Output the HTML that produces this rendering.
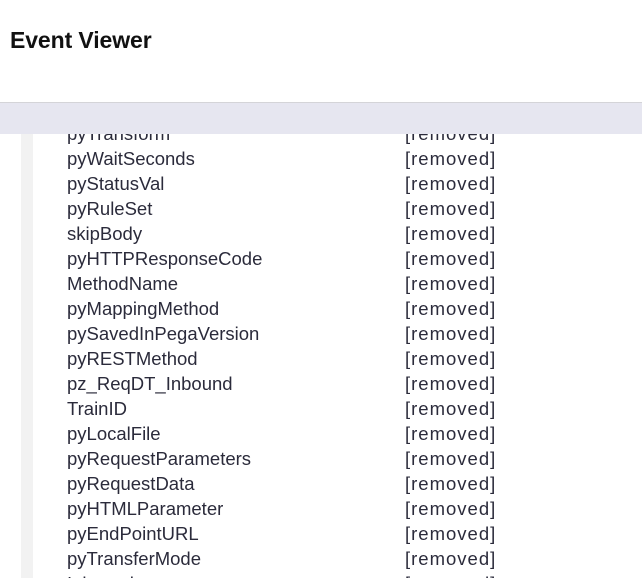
<!DOCTYPE html>
<html><head><style>
html,body{margin:0;padding:0;background:#fff;width:642px;height:580px;overflow:hidden;font-family:"Liberation Sans",sans-serif;}
.title{position:absolute;left:10px;top:27px;font-size:23px;font-weight:bold;color:#111;letter-spacing:-0.1px;}
.hline{position:absolute;left:0;top:102px;width:642px;height:1px;background:#d4d4d8;}
.band{position:absolute;left:0;top:103px;width:642px;height:31px;background:#e6e6f0;z-index:2;}
.clip{position:absolute;left:0;top:103px;width:642px;height:475px;overflow:hidden;}
.bar{position:absolute;left:21px;top:0;width:12px;height:475px;background:#f2f2f2;}
.list{position:absolute;left:0;top:17.5px;}
.row{position:relative;height:25px;line-height:25px;font-size:18.5px;color:#2b2b3b;white-space:nowrap;}
.k{position:absolute;left:67px;}
.v{position:absolute;left:405px;letter-spacing:1px;}
</style></head><body>
<div class="title">Event Viewer</div>
<div class="hline"></div>
<div class="band"></div>
<div class="clip"><div class="bar"></div><div class="list">
<div class="row"><span class="k">pyTransform</span><span class="v">[removed]</span></div>
<div class="row"><span class="k">pyWaitSeconds</span><span class="v">[removed]</span></div>
<div class="row"><span class="k">pyStatusVal</span><span class="v">[removed]</span></div>
<div class="row"><span class="k">pyRuleSet</span><span class="v">[removed]</span></div>
<div class="row"><span class="k">skipBody</span><span class="v">[removed]</span></div>
<div class="row"><span class="k">pyHTTPResponseCode</span><span class="v">[removed]</span></div>
<div class="row"><span class="k">MethodName</span><span class="v">[removed]</span></div>
<div class="row"><span class="k">pyMappingMethod</span><span class="v">[removed]</span></div>
<div class="row"><span class="k">pySavedInPegaVersion</span><span class="v">[removed]</span></div>
<div class="row"><span class="k">pyRESTMethod</span><span class="v">[removed]</span></div>
<div class="row"><span class="k">pz_ReqDT_Inbound</span><span class="v">[removed]</span></div>
<div class="row"><span class="k">TrainID</span><span class="v">[removed]</span></div>
<div class="row"><span class="k">pyLocalFile</span><span class="v">[removed]</span></div>
<div class="row"><span class="k">pyRequestParameters</span><span class="v">[removed]</span></div>
<div class="row"><span class="k">pyRequestData</span><span class="v">[removed]</span></div>
<div class="row"><span class="k">pyHTMLParameter</span><span class="v">[removed]</span></div>
<div class="row"><span class="k">pyEndPointURL</span><span class="v">[removed]</span></div>
<div class="row"><span class="k">pyTransferMode</span><span class="v">[removed]</span></div>
<div class="row"><span class="k">Inbound</span><span class="v">[removed]</span></div>
</div></div>
</body></html>
